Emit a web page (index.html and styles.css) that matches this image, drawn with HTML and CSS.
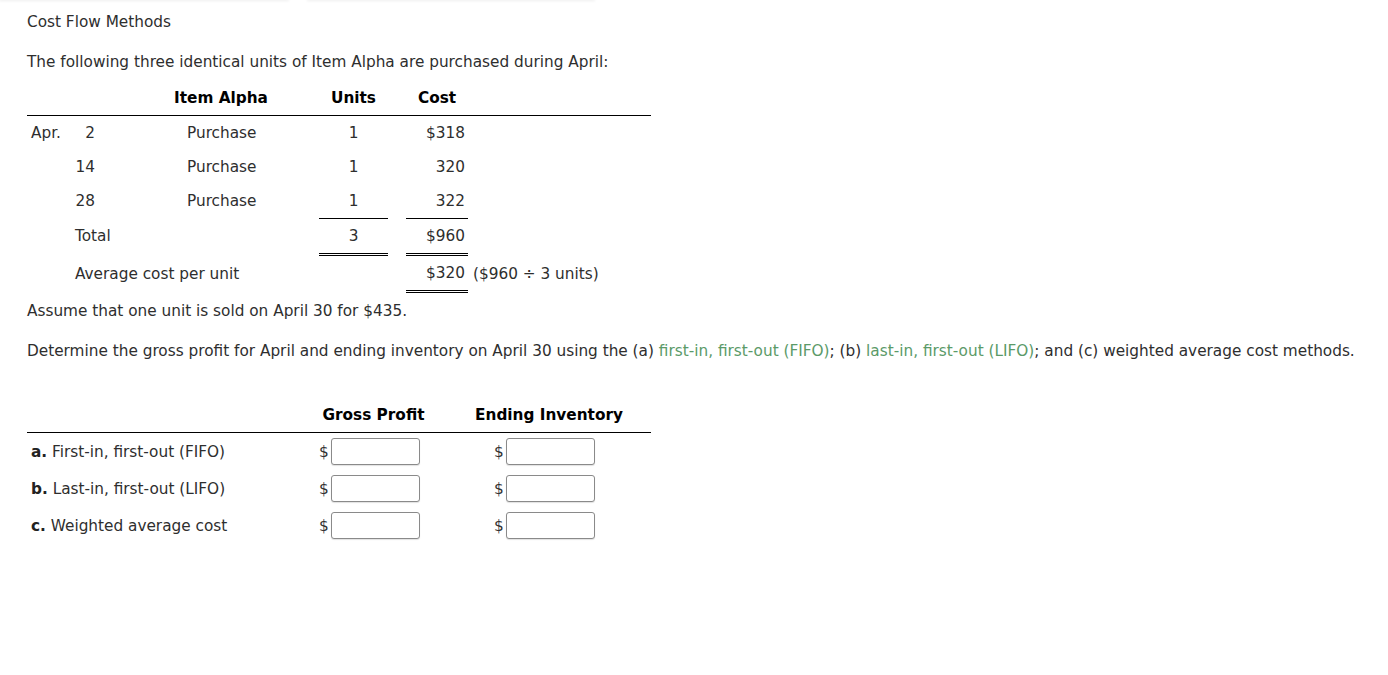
FILE: index.html
```
<!DOCTYPE html>
<html>
<head>
<meta charset="utf-8">
<link rel="stylesheet" href="styles.css">
</head>
<body>
<div class="topbar"><div class="tab tab1"></div><div class="tab tab2"></div></div>
<div class="page">
  <p class="title">Cost Flow Methods</p>
  <p class="para p1">The following three identical units of Item Alpha are purchased during April:</p>

  <div class="t1">
    <div class="r1 head">
      <div class="c-item">Item Alpha</div>
      <div class="c-units">Units</div>
      <div class="c-cost">Cost</div>
    </div>
    <div class="r1 body">
      <div class="c-mon">Apr.</div>
      <div class="c-day">2</div>
      <div class="c-desc">Purchase</div>
      <div class="c-units">1</div>
      <div class="c-cost">$318</div>
    </div>
    <div class="r1 body">
      <div class="c-day">14</div>
      <div class="c-desc">Purchase</div>
      <div class="c-units">1</div>
      <div class="c-cost">320</div>
    </div>
    <div class="r1 body">
      <div class="c-day">28</div>
      <div class="c-desc">Purchase</div>
      <div class="c-units single">1</div>
      <div class="c-cost single">322</div>
    </div>
    <div class="r1 body">
      <div class="c-label">Total</div>
      <div class="c-units double">3</div>
      <div class="c-cost double">$960</div>
    </div>
    <div class="r1 avg">
      <div class="c-label">Average cost per unit</div>
      <div class="c-cost double">$320</div>
      <div class="c-note">($960 ÷ 3 units)</div>
    </div>
  </div>

  <p class="para p2">Assume that one unit is sold on April 30 for $435.</p>
  <p class="para p3">Determine the gross profit for April and ending inventory on April 30 using the (a) <span class="term">first-in, first-out (FIFO)</span>; (b) <span class="term">last-in, first-out (LIFO)</span>; and (c) weighted average cost methods.</p>

  <div class="t2">
    <div class="r2 head2">
      <div></div>
      <div class="h-gp">Gross Profit</div>
      <div class="h-ei">Ending Inventory</div>
    </div>
    <div class="r2">
      <div class="lab"><b>a.</b> First-in, first-out (FIFO)</div>
      <div class="gp"><span class="cur">$</span><span class="box"></span></div>
      <div class="ei"><span class="cur">$</span><span class="box"></span></div>
    </div>
    <div class="r2">
      <div class="lab"><b>b.</b> Last-in, first-out (LIFO)</div>
      <div class="gp"><span class="cur">$</span><span class="box"></span></div>
      <div class="ei"><span class="cur">$</span><span class="box"></span></div>
    </div>
    <div class="r2">
      <div class="lab"><b>c.</b> Weighted average cost</div>
      <div class="gp"><span class="cur">$</span><span class="box"></span></div>
      <div class="ei"><span class="cur">$</span><span class="box"></span></div>
    </div>
  </div>
</div>
</body>
</html>
```

FILE: styles.css
```
html, body {
  margin: 0;
  padding: 0;
  background: #fff;
}
body {
  font-family: "DejaVu Sans", Verdana, sans-serif;
  font-size: 15.3px;
  color: #2e2e2e;
}
.topbar {
  display: flex;
  height: 0;
  gap: 20px;
}
.tab {
  height: 0;
  box-shadow: 0 0 3px 1px rgba(0,0,0,0.08);
}
.tab1 { width: 288px; }
.tab2 { width: 286px; }

.page {
  padding: 12px 0 0 27px;
}
p { margin: 0; }
.title { line-height: 20px; }
.para { line-height: 20px; }
.p1 { margin-top: 20px; }

.t1 {
  margin-top: 10px;
  width: 624px;
}
.r1 {
  display: grid;
  grid-template-columns: 48px 20px 92px 132px 69px 18px 62px 1fr;
  line-height: 34px;
}
.r1.head {
  border-bottom: 1px solid #000;
  font-weight: bold;
  color: #000;
  height: 33px;
  line-height: 33px;
}
.r1.body > div {
  padding-top: 1px;
  line-height: 33px;
}
.r1.avg { line-height: 33px; }
.c-item {
  grid-column: 3 / 5;
  text-align: center;
  padding-left: 28px;
}
.c-mon { grid-column: 1; padding-left: 4px; }
.c-day { grid-column: 2; text-align: right; }
.c-desc { grid-column: 4; }
.c-label { grid-column: 2 / 5; }
.c-units { grid-column: 5; text-align: center; }
.c-cost { grid-column: 7; text-align: right; padding-right: 3px; }
.head .c-cost { text-align: center; padding-right: 0; }
.c-note { grid-column: 8; padding-left: 5px; }
.avg .c-label, .avg .c-note { padding-top: 2px; }
.avg .c-cost { padding-top: 1px; }
.single { border-bottom: 1px solid #000; }
.double { border-bottom: 3px double #000; }

.p2 { margin-top: 8px; }
.p3 { margin-top: 20px; }

.t2 {
  margin-top: 37px;
  width: 624px;
}
.r2 {
  display: grid;
  grid-template-columns: 290px 130px 1fr;
  height: 37px;
  align-items: center;
}
.r2.head2 {
  height: 34px;
  border-bottom: 1px solid #000;
  font-weight: bold;
  color: #000;
}
.h-gp { text-align: center; padding-right: 17px; }
.h-ei { text-align: center; }
.lab { padding-left: 4px; }
.lab b { color: #222; }
.gp, .ei {
  display: flex;
  align-items: center;
}
.gp { padding-left: 2px; }
.ei { padding-left: 47px; }
.cur {
  margin-right: 2px;
  color: #333;
}
.box {
  display: block;
  width: 87px;
  height: 25px;
  border: 1px solid #8a8a8a;
  border-radius: 3px;
  box-shadow: 0 1px 1px rgba(0,0,0,0.12);
  background: #fff;
}
.term { color: #5b9a68; }
```
